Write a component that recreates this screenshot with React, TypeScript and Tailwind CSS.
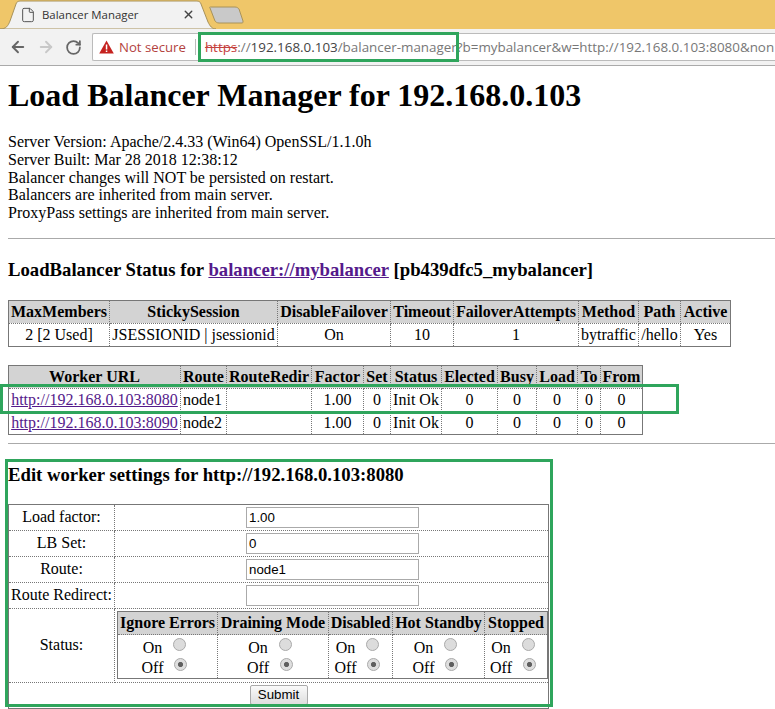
import { ArrowLeft, ArrowRight, RotateCw, X, File } from "lucide-react";

const serif = "font-['Liberation_Serif','Times_New_Roman',serif]";

const th = "border border-dotted border-[#777] bg-[#d3d3d3] px-0 py-0 font-bold text-center text-black";
const td = "border border-dotted border-[#777] px-0 py-0 text-center text-black";

const statusHeaders = ["Ignore Errors", "Draining Mode", "Disabled", "Hot Standby", "Stopped"];

function Radio({ checked }: { checked?: boolean }) {
  return (
    <input
      type="radio"
      readOnly
      checked={!!checked}
      className={
        "appearance-none inline-block w-[13px] h-[13px] rounded-full border border-[#aaa] align-[2px] " +
        (checked
          ? "bg-[radial-gradient(circle,#5f5f5f_0,#5f5f5f_28%,#dedede_38%)]"
          : "bg-[#dcdcdc]")
      }
    />
  );
}

function TextField({ value }: { value?: string }) {
  return (
    <input
      readOnly
      value={value ?? ""}
      className="block w-[173px] h-[21px] mx-auto border border-[#aaa] bg-white px-[2px] text-[13.3px] text-black font-['Liberation_Sans',Arial,sans-serif] outline-none relative left-[1px]"
    />
  );
}

function WorkerRow({ url, route }: { url: string; route: string }) {
  return (
    <tr className="h-[23px]">
      <td className={td}>
        <a href="#" className="text-[#551a8b] underline">
          {url}
        </a>
      </td>
      <td className={td + " text-left pl-[2px]"}>{route}</td>
      <td className={td}></td>
      <td className={td}>1.00</td>
      <td className={td}>0</td>
      <td className={td}>Init Ok</td>
      <td className={td}>0</td>
      <td className={td}>0</td>
      <td className={td}>0</td>
      <td className={td}>0</td>
      <td className={td}>0</td>
    </tr>
  );
}

function Browser() {
  return (
    <div className="shrink-0">
      <div className="relative h-[29px] bg-[#efc669]">
        <svg className="absolute left-0 top-0" width="260" height="29" viewBox="0 0 260 29">
          <path d="M0 29 C6 29 8 26 10 21 L16 4 C17 1 19 1 22 1 L195 1 C198 1 200 1 201 4 L208 22 C210 26 212 29 216 29 Z" fill="#f2f2f2" stroke="#a8925a" strokeWidth="1" />
          <path d="M210 8 C209 7 210 7 212 7 L235 7 C237 7 238 8 239 9 L243 21 C243 23 243 23 241 23 L219 23 C217 23 216 22 215 21 Z" fill="#c9c9c9" stroke="#a8925a" strokeWidth="1" />
        </svg>
        <File className="absolute left-[20px] top-[7px] text-[#555]" size={16} strokeWidth={1.5} />
        <span className="absolute left-[42px] top-[6px] text-[11.4px] leading-[18px] text-[#333] font-['Open_Sans',sans-serif]">
          Balancer Manager
        </span>
        <X className="absolute left-[182px] top-[8px] text-[#444]" size={13} strokeWidth={2.5} />
      </div>
      <div className="flex items-center h-[37px] bg-[#f2f2f2] border-b border-[#aaa]">
        <ArrowLeft className="ml-[9px] text-[#666]" size={18} strokeWidth={2.5} />
        <ArrowRight className="ml-[10px] text-[#c8c8c8]" size={18} strokeWidth={2.5} />
        <RotateCw className="ml-[10px] text-[#666]" size={17} strokeWidth={2.5} />
        <div className="ml-[10px] flex-1 min-w-0 flex items-center h-[28px] bg-white border border-[#bbb] border-r-0 rounded-l-[2px] overflow-hidden whitespace-nowrap font-['Open_Sans',sans-serif] text-[13.2px]">
          <svg className="ml-[6px] shrink-0" width="15" height="14" viewBox="0 0 15 14">
            <path d="M7.5 0.5 L14.8 13.5 L0.2 13.5 Z" fill="#c5221f" />
            <rect x="6.8" y="4.5" width="1.5" height="5" fill="#fff" />
            <rect x="6.8" y="10.5" width="1.5" height="1.5" fill="#fff" />
          </svg>
          <span className="ml-[5px] text-[#b3423e]">Not secure</span>
          <span className="ml-[9px] w-px h-[16px] bg-[#bbb] shrink-0" />
          <span className="ml-[9px] text-[13.4px]">
            <span className="text-[#c5413d] line-through">https</span>
            <span className="text-[#777]">://</span>
            <span className="text-[#444]">192.168.0.103</span>
            <span className="text-[#777]">/balancer-manager?b=mybalancer&amp;w=http://192.168.0.103:8080&amp;non</span>
          </span>
        </div>
      </div>
    </div>
  );
}

export default function App() {
  return (
    <div className={"relative h-[709px] overflow-hidden bg-white text-black text-[16px] leading-[18px] " + serif}>
      <Browser />
      <div className="px-2">
        <h1 className="mt-[11px] text-[32px] leading-[37px] font-bold">Load Balancer Manager for 192.168.0.103</h1>
        <div className="mt-[19px] leading-[17.75px]">
          <div>Server Version: Apache/2.4.33 (Win64) OpenSSL/1.1.0h</div>
          <div>Server Built: Mar 28 2018 12:38:12</div>
          <div>Balancer changes will NOT be persisted on restart.</div>
          <div>Balancers are inherited from main server.</div>
          <div>ProxyPass settings are inherited from main server.</div>
        </div>
        <hr className="mt-[16px] -mr-2 border-[#aaa]" />
        <h3 className="mt-[20px] text-[18.72px] leading-[22px] font-bold">
          LoadBalancer Status for{" "}
          <a href="#" className="text-[#551a8b] underline">
            balancer://mybalancer
          </a>{" "}
          [pb439dfc5_mybalancer]
        </h3>

        <table className="mt-[19px] w-[722px] table-fixed border-collapse border border-[#777]">
          <colgroup>
            <col className="w-[101px]" />
            <col className="w-[168px]" />
            <col className="w-[113px]" />
            <col className="w-[63px]" />
            <col className="w-[125px]" />
            <col className="w-[60px]" />
            <col className="w-[42px]" />
            <col className="w-[50px]" />
          </colgroup>
          <tbody>
            <tr className="h-[23px]">
              {["MaxMembers", "StickySession", "DisableFailover", "Timeout", "FailoverAttempts", "Method", "Path", "Active"].map((h) => (
                <th key={h} className={th}>
                  {h}
                </th>
              ))}
            </tr>
            <tr className="h-[23px]">
              {["2 [2 Used]", "JSESSIONID | jsessionid", "On", "10", "1", "bytraffic", "/hello", "Yes"].map((c) => (
                <td key={c} className={td}>
                  {c}
                </td>
              ))}
            </tr>
          </tbody>
        </table>

        <table className="mt-[18px] w-[634px] table-fixed border-collapse border border-[#777]">
          <colgroup>
            <col className="w-[172px]" />
            <col className="w-[46px]" />
            <col className="w-[85px]" />
            <col className="w-[52px]" />
            <col className="w-[27px]" />
            <col className="w-[51px]" />
            <col className="w-[56px]" />
            <col className="w-[39px]" />
            <col className="w-[41px]" />
            <col className="w-[23px]" />
            <col className="w-[42px]" />
          </colgroup>
          <tbody>
            <tr className="h-[23px]">
              {["Worker URL", "Route", "RouteRedir", "Factor", "Set", "Status", "Elected", "Busy", "Load", "To", "From"].map((h) => (
                <th key={h} className={th}>
                  {h}
                </th>
              ))}
            </tr>
            <WorkerRow url="http://192.168.0.103:8080" route="node1" />
            <WorkerRow url="http://192.168.0.103:8090" route="node2" />
          </tbody>
        </table>

        <hr className="mt-[8px] -mr-2 border-[#aaa]" />
        <h3 className="mt-[20px] text-[18.72px] leading-[22px] font-bold">Edit worker settings for http://192.168.0.103:8080</h3>

        <table className="mt-[18px] w-[541px] table-fixed border-collapse border border-[#777]">
          <colgroup>
            <col className="w-[106px]" />
            <col />
          </colgroup>
          <tbody>
            {[
              ["Load factor:", "1.00"],
              ["LB Set:", "0"],
              ["Route:", "node1"],
              ["Route Redirect:", ""],
            ].map(([label, value]) => (
              <tr key={label} className="h-[26px]">
                <td className={td}>{label}</td>
                <td className={td}>
                  <TextField value={value} />
                </td>
              </tr>
            ))}
            <tr className="h-[74px]">
              <td className={td}>Status:</td>
              <td className={td + " px-[2px]"}>
                <table className="w-[430px] table-fixed border-collapse border border-[#777]">
                  <colgroup>
                    <col className="w-[100px]" />
                    <col className="w-[111px]" />
                    <col className="w-[64px]" />
                    <col className="w-[92px]" />
                    <col className="w-[63px]" />
                  </colgroup>
                  <tbody>
                    <tr className="h-[23px]">
                      {statusHeaders.map((h) => (
                        <th key={h} className={th}>
                          {h}
                        </th>
                      ))}
                    </tr>
                    <tr className="h-[44px]">
                      {statusHeaders.map((h) => (
                        <td key={h} className={td + " pt-[3px] pr-[6px]"}>
                          <div className="h-[20px] leading-[20px]">
                            On <span className="ml-[7px]"><Radio /></span>
                          </div>
                          <div className="h-[20px] leading-[20px]">
                            Off <span className="ml-[7px]"><Radio checked /></span>
                          </div>
                        </td>
                      ))}
                    </tr>
                  </tbody>
                </table>
              </td>
            </tr>
            <tr className="h-[26px]">
              <td colSpan={2} className={td}>
                <button className="h-[20px] w-[58px] border border-[#aaa] rounded-[2px] bg-[linear-gradient(#fafafa,#dedede)] text-[13.3px] leading-[18px] text-black font-['Liberation_Sans',Arial,sans-serif]">
                  Submit
                </button>
              </td>
            </tr>
          </tbody>
        </table>
      </div>

      {/* green highlight boxes drawn over the shot */}
      <div className="absolute left-[198px] top-[32px] w-[261px] h-[30px] border-[3px] border-[#2fa55c]" />
      <div className="absolute left-0 top-[384px] w-[679px] h-[30px] border-[3px] border-[#2fa55c]" />
      <div className="absolute left-[5px] top-[459px] w-[548px] h-[248px] border-[3px] border-[#2fa55c]" />
    </div>
  );
}
